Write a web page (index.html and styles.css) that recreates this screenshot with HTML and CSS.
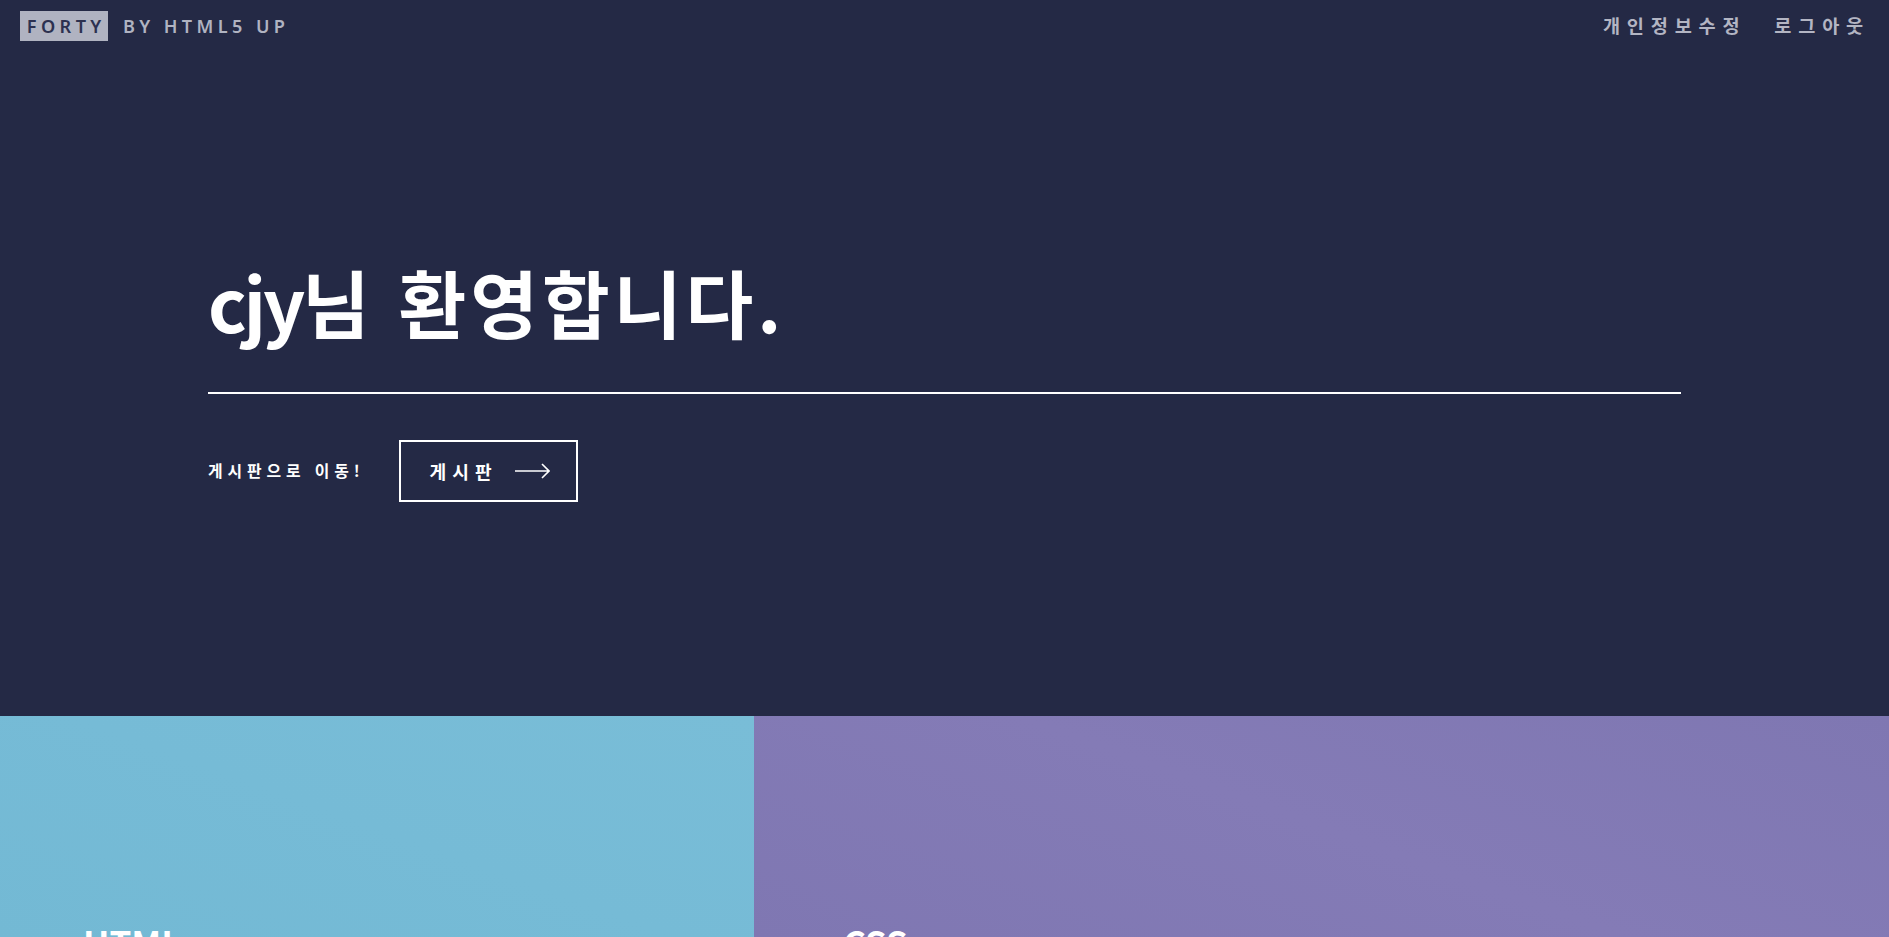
FILE: index.html
```html
<!DOCTYPE html>
<html lang="ko">
<head>
<meta charset="utf-8">
<title>Forty</title>
<link rel="stylesheet" href="styles.css">
</head>
<body>
<div class="hero">
  <header class="site-header">
    <a class="logo" href="#"><strong>Forty</strong> <span>by HTML5 UP</span></a>
    <nav class="top-nav">
      <a href="#">개인정보수정</a>
      <a href="#">로그아웃</a>
    </nav>
  </header>
  <section class="banner">
    <div class="inner">
      <h1 class="major-title"><span class="uname">cjy</span>님 환영합니다.</h1>
      <div class="content">
        <p class="lead">게시판으로 이동!</p>
        <a class="button next" href="#">게시판<svg class="arrow" viewBox="0 0 35 16" width="35" height="16" aria-hidden="true"><path d="M0 8 H34 M27 1 L34 8 L27 15" fill="none" stroke="#ffffff" stroke-width="1.6"/></svg></a>
      </div>
    </div>
  </section>
</div>
<section class="tiles">
  <article class="tile tile-html"><h3>HTML</h3></article>
  <article class="tile tile-css"><h3>CSS</h3></article>
</section>
</body>
</html>
```
FILE: styles.css
```css
html, body {
  margin: 0;
  padding: 0;
}
body {
  background: #242945;
  color: #ffffff;
  font-family: "Noto Sans CJK KR", "Noto Sans", sans-serif;
}
.hero {
  background: #242945;
}
.site-header {
  display: flex;
  align-items: center;
  height: 52px;
  padding: 0 6px 0 20px;
  font-family: "Noto Sans", "Noto Sans CJK KR", sans-serif;
  font-weight: 600;
  text-transform: uppercase;
}
.logo {
  font-size: 18.13px;
  letter-spacing: 4.4px;
  color: #b0b3c1;
  text-decoration: none;
  line-height: 52px;
  white-space: nowrap;
}
.logo strong {
  display: inline-block;
  background: #b0b3c1;
  color: #2c3150;
  line-height: 30px;
  padding: 0 2.3px 0 6.8px;
  margin-right: 5.9px;
  font-weight: 600;
}
.top-nav {
  display: flex;
  justify-content: flex-end;
  flex-grow: 1;
  margin-bottom: 3px;
}
.top-nav a {
  color: #b3b5c3;
  text-decoration: none;
  font-family: "Noto Sans CJK KR", sans-serif;
  font-weight: 700;
  font-size: 18.6px;
  letter-spacing: 6.8px;
  padding: 0 13px 0 15px;
  line-height: 46px;
}
.banner {
  box-sizing: border-box;
  height: 664px;
  padding-top: 202px;
}
.inner {
  max-width: 1473px;
  margin: 0 auto;
}
.major-title {
  margin: 0;
  font-family: "Noto Sans CJK KR", sans-serif;
  font-weight: 700;
  font-size: 73.67px;
  line-height: 1.3;
  letter-spacing: 4px;
  padding-bottom: 42px;
  border-bottom: 2px solid #ffffff;
  color: #ffffff;
}
.uname {
  letter-spacing: -3.2px;
}
.content {
  display: flex;
  align-items: center;
  gap: 34px;
  margin-top: 46px;
}
.lead {
  margin: 0;
  font-size: 15.87px;
  font-weight: 700;
  letter-spacing: 4.9px;
  color: #ffffff;
}
.button {
  display: inline-flex;
  align-items: center;
  box-sizing: border-box;
  height: 62px;
  padding: 0 28px 0 31px;
  box-shadow: inset 0 0 0 2px #ffffff;
  color: #ffffff;
  text-decoration: none;
  font-size: 18.13px;
  font-weight: 700;
  letter-spacing: 6px;
}
.arrow {
  display: block;
  margin-left: 17.5px;
}
.tiles {
  display: flex;
  height: 221px;
  overflow: hidden;
}
.tile {
  box-sizing: border-box;
  padding-top: 197px;
  overflow: hidden;
}
.tile h3 {
  margin: 0;
  font-family: "Noto Sans CJK KR", sans-serif;
  font-weight: 600;
  font-size: 35px;
  line-height: 1.65;
  color: #ffffff;
}
.tile-html {
  flex: 0 0 754px;
  padding-left: 83px;
  background: linear-gradient(20deg, #73b9d4 0%, #76bbd6 50%, #79bdd7 100%);
}
.tile-css {
  flex: 1 1 auto;
  padding-left: 89px;
  background: linear-gradient(20deg, #7f77b2 0%, #847bb6 50%, #7f77b2 100%);
}
```
